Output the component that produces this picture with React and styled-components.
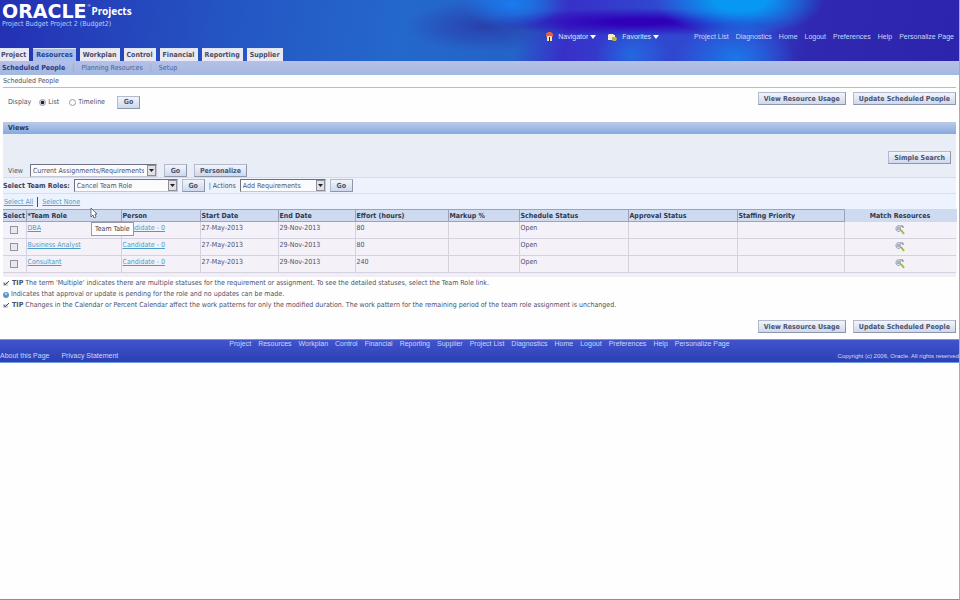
import React, { useState } from "react";
import styled, { createGlobalStyle } from "styled-components";

const tabs = ["Project", "Resources", "Workplan", "Control", "Financial", "Reporting", "Supplier"];
const subTabs = ["Scheduled People", "Planning Resources", "Setup"];
const globalLinks = ["Project List", "Diagnostics", "Home", "Logout", "Preferences", "Help", "Personalize Page"];

const columns = [
  { label: "Select", width: 23 },
  { label: "*Team Role", width: 95 },
  { label: "Person", width: 79 },
  { label: "Start Date", width: 78 },
  { label: "End Date", width: 77 },
  { label: "Effort (hours)", width: 93 },
  { label: "Markup %", width: 71 },
  { label: "Schedule Status", width: 109 },
  { label: "Approval Status", width: 109 },
  { label: "Staffing Priority", width: 107 },
  { label: "Match Resources", width: 112 },
];

const roles = [
  { role: "DBA", person: "Candidate - 0", start: "27-May-2013", end: "29-Nov-2013", effort: 80, status: "Open" },
  { role: "Business Analyst", person: "Candidate - 0", start: "27-May-2013", end: "29-Nov-2013", effort: 80, status: "Open" },
  { role: "Consultant", person: "Candidate - 0", start: "27-May-2013", end: "29-Nov-2013", effort: 240, status: "Open" },
];

const HomeIcon = () => (
  <svg width="7" height="10" viewBox="0 0 7 10" aria-hidden="true">
    <path d="M1 4h5v5H1z" fill="#f3e3a8" />
    <path d="M0 5V2l2-2h3l2 2v3L5 4H2z" fill="#e2604a" />
    <path d="M3 5h1v4H3z" fill="#2a2350" />
  </svg>
);

const FolderIcon = () => (
  <svg width="9" height="9" viewBox="0 0 9 9" aria-hidden="true">
    <path d="M0 2l1-1h4l1 1h1v5H0z" fill="#f7efc4" />
    <path d="M4 4h4l1 2-1 2H5L4 7z" fill="#bdb53c" />
  </svg>
);

const MatchIcon = () => (
  <svg width="10" height="10" viewBox="0 0 10 10" aria-hidden="true">
    <path d="M5 1C2 0 1 2 1 4s2 3 4 2" fill="#e6ecf5" stroke="#8f98ac" />
    <path d="M3 2v3M5 1h3v2M5 2v3l2 1" stroke="#6d7890" fill="none" />
    <path d="M6 5l3 4" stroke="#a4bd32" strokeWidth="2" />
  </svg>
);

const TipIcon = () => (
  <svg width="7" height="7" viewBox="0 0 7 7" aria-hidden="true">
    <path d="M0 2h5v4H0z" fill="#d4d8de" />
    <path d="M1 3l1 2 4-4" stroke="#47505c" fill="none" />
  </svg>
);

const InfoIcon = () => (
  <svg width="6" height="6" viewBox="0 0 6 6" aria-hidden="true">
    <circle cx="3" cy="3" r="3" fill="#5b93cf" />
    <circle cx="3" cy="2" r="1" fill="#d5e6f6" />
  </svg>
);

const Cursor = () => (
  <svg width="8" height="12" viewBox="0 0 8 12" aria-hidden="true">
    <path d="M1 1v9l2-2 1 3 2-1-1-3h2z" fill="#fff" stroke="#4b4f63" strokeWidth="0.8" />
  </svg>
);

const Dropdown = ({ label, width, options }) => (
  <SelectBox $width={width}>
    <NativeSelect aria-label={label}>
      {options.map((option) => (
        <option key={option}>{option}</option>
      ))}
    </NativeSelect>
    <SelectArrow>
      <svg width="5" height="3" viewBox="0 0 5 3" aria-hidden="true">
        <path d="M0 0h5L2.5 3z" fill="#222" />
      </svg>
    </SelectArrow>
  </SelectBox>
);

const App = () => {
  const [display, setDisplay] = useState("list");

  return (
    <Page>
      <GlobalStyle />
      <Header>
        <Brand>
          <BrandLine>
            <Logo>ORACLE</Logo>
            <Registered>®</Registered>
            <Product>Projects</Product>
          </BrandLine>
          <ProjectName>Project Budget Project 2 (Budget2)</ProjectName>
        </Brand>
        <GlobalNav>
          <MenuButton type="button">
            <HomeIcon />
            <MenuText>Navigator</MenuText>
            <Caret />
          </MenuButton>
          <MenuButton type="button">
            <FolderIcon />
            <MenuText>Favorites</MenuText>
            <Caret />
          </MenuButton>
          <LinkRow>
            {globalLinks.map((link) => (
              <LightLink key={link} href="#">{link}</LightLink>
            ))}
          </LinkRow>
        </GlobalNav>
        <TabBar>
          {tabs.map((tab) => (
            <Tab key={tab} href="#" $active={tab === "Resources"}>{tab}</Tab>
          ))}
        </TabBar>
      </Header>

      <SubNav>
        {subTabs.map((tab, index) => (
          <SubTab key={tab} href="#" $active={index === 0}>{tab}</SubTab>
        ))}
      </SubNav>

      <Content>
        <Title>Scheduled People</Title>

        <DisplayRow>
          <span>Display</span>
          <RadioGroup>
            <RadioLabel>
              <Radio type="radio" name="display" checked={display === "list"} onChange={() => setDisplay("list")} />
              List
            </RadioLabel>
            <RadioLabel>
              <Radio type="radio" name="display" checked={display === "timeline"} onChange={() => setDisplay("timeline")} />
              Timeline
            </RadioLabel>
          </RadioGroup>
          <Button type="button">Go</Button>
          <PageActions>
            <Button type="button">View Resource Usage</Button>
            <Button type="button">Update Scheduled People</Button>
          </PageActions>
        </DisplayRow>

        <ViewsBar>Views</ViewsBar>
        <SearchPanel>
          <SearchActions>
            <Button type="button">Simple Search</Button>
          </SearchActions>
          <ViewRow>
            <span>View</span>
            <Dropdown label="View" width={127} options={["Current Assignments/Requirements"]} />
            <Button type="button">Go</Button>
            <Button type="button">Personalize</Button>
          </ViewRow>
        </SearchPanel>

        <RolesRow>
          <RolesLabel>Select Team Roles:</RolesLabel>
          <Dropdown label="Select Team Roles" width={104} options={["Cancel Team Role"]} />
          <Button type="button">Go</Button>
          <span>| Actions</span>
          <Dropdown label="Actions" width={86} options={["Add Requirements"]} />
          <Button type="button">Go</Button>
        </RolesRow>

        <TableArea>
          <SelectLinks>
            <TableLink href="#">Select All</TableLink>
            <Divider />
            <TableLink href="#">Select None</TableLink>
          </SelectLinks>
          <Table>
            <thead>
              <tr>
                {columns.map(({ label, width }) => (
                  <HeadCell key={label} $width={width}>{label}</HeadCell>
                ))}
              </tr>
            </thead>
            <tbody>
              {roles.map((row) => (
                <tr key={row.role}>
                  <Cell>
                    <Checkbox type="checkbox" aria-label={`Select ${row.role}`} />
                  </Cell>
                  <Cell><TableLink href="#">{row.role}</TableLink></Cell>
                  <Cell><TableLink href="#">{row.person}</TableLink></Cell>
                  <Cell>{row.start}</Cell>
                  <Cell>{row.end}</Cell>
                  <Cell>{row.effort}</Cell>
                  <Cell />
                  <Cell>{row.status}</Cell>
                  <Cell />
                  <Cell />
                  <Cell>
                    <IconButton type="button" aria-label="Match resources"><MatchIcon /></IconButton>
                  </Cell>
                </tr>
              ))}
            </tbody>
          </Table>
          <Pointer><Cursor /></Pointer>
          <Tooltip role="tooltip">Team Table</Tooltip>
        </TableArea>

        <Tips>
          <Tip>
            <TipIcon />
            <b>TIP</b> The term 'Multiple' indicates there are multiple statuses for the requirement or assignment. To see the detailed statuses, select the Team Role link.
          </Tip>
          <Tip>
            <InfoIcon />
            Indicates that approval or update is pending for the role and no updates can be made.
          </Tip>
          <Tip>
            <TipIcon />
            <b>TIP</b> Changes in the Calendar or Percent Calendar affect the work patterns for only the modified duration. The work pattern for the remaining period of the team role assignment is unchanged.
          </Tip>
        </Tips>

        <BottomActions>
          <Button type="button">View Resource Usage</Button>
          <Button type="button">Update Scheduled People</Button>
        </BottomActions>
      </Content>

      <Footer>
        <FooterLinks>
          {[...tabs, ...globalLinks].map((link) => (
            <LightLink key={link} href="#">{link}</LightLink>
          ))}
        </FooterLinks>
        <FooterBottom>
          <LightLink href="#">About this Page</LightLink>
          <LightLink href="#">Privacy Statement</LightLink>
          <Copyright>Copyright (c) 2006, Oracle. All rights reserved</Copyright>
        </FooterBottom>
      </Footer>
    </Page>
  );
};

export default App;

// Styled Components

const GlobalStyle = createGlobalStyle`
  * {
    box-sizing: border-box;
  }

  body {
    margin: 0;
    background: #fefefe;
  }
`;

const Page = styled.div`
  min-height: 100vh;
  border-right: 1px solid #a9a9b4;
  border-bottom: 1px solid #8d8d95;
  font-family: "DejaVu Sans Condensed", "DejaVu Sans", sans-serif;
  font-size: 7px;
  line-height: 10px;
  color: #4c5068;
  overflow: hidden;
`;

const Header = styled.header`
  display: grid;
  grid-template-columns: auto 1fr;
  grid-template-rows: 48px 13px;
  background:
    radial-gradient(ellipse 85px 36px at 740px 0, #0798f2 30%, transparent 100%),
    radial-gradient(ellipse 60px 36px at 735px 58px, #1b77e8, transparent 100%),
    radial-gradient(ellipse 50px 24px at 512px 4px, #1a7af0, transparent 100%),
    radial-gradient(ellipse 150px 14px at 640px 22px, #3000b8 20%, transparent 100%),
    radial-gradient(ellipse 80px 26px at 485px 26px, #2a40ac, transparent 100%),
    radial-gradient(ellipse 36px 28px at 632px 55px, #2468e0, transparent 100%),
    linear-gradient(100deg, #2430b4 0%, #2444bc 12%, #2458c4 26%, #2468cc 42%, #2463c8 54%, #3830c8 59%, #3048d0 68%, #3444cc 78%, #3028b0 84%, #2c24ac 100%);
`;

const Brand = styled.div`
  padding: 3px 2px 0;
`;

const BrandLine = styled.div`
  display: flex;
  align-items: center;
  gap: 1px;
  height: 16px;
  color: #fff;
`;

const Logo = styled.span`
  font: bold 19px/16px "DejaVu Sans", sans-serif;
`;

const Registered = styled.span`
  align-self: flex-start;
  font: 4px/6px "Liberation Sans", Arial, sans-serif;
`;

const Product = styled.span`
  font: bold 10px/16px "Noto Sans", sans-serif;
`;

const ProjectName = styled.div`
  color: #b9cdf6;
`;

const GlobalNav = styled.nav`
  display: flex;
  justify-content: flex-end;
  align-items: flex-end;
  gap: 12px;
  padding: 0 5px 6px 0;
  font: 7px/10px "Liberation Sans", Arial, sans-serif;
`;

const MenuButton = styled.button`
  display: flex;
  align-items: center;
  gap: 2px;
  padding: 0;
  border: 0;
  background: none;
  color: #d5e2ff;
  font: inherit;
  cursor: pointer;
`;

const MenuText = styled.span`
  padding-left: 3px;
`;

const Caret = styled.span`
  border: 3px solid transparent;
  border-top: 4px solid #fff;
  border-bottom: 0;
`;

const LinkRow = styled.div`
  display: flex;
  gap: 7px;
  margin-left: 23px;
`;

const LightLink = styled.a`
  color: #c8d8fa;
  text-decoration: none;
  white-space: nowrap;
`;

const TabBar = styled.nav`
  grid-column: 1 / -1;
  display: flex;
  gap: 4px;
`;

const Tab = styled.a`
  padding: 1px 3px;
  background: ${({ $active }) => ($active ? "#a9c0ea" : "#e9e9f3")};
  border-top: 1px solid #dfe6f5;
  color: ${({ $active }) => ($active ? "#23438c" : "#4a4c62")};
  font-weight: bold;
  text-decoration: none;

  &:first-child {
    padding-left: 1px;
  }
`;

const SubNav = styled.nav`
  display: flex;
  height: 14px;
  padding: 2px;
  background: linear-gradient(#b7bfe6, #a3b8e0);
`;

const SubTab = styled.a`
  color: ${({ $active }) => ($active ? "#1f3c8c" : "#47639b")};
  font-weight: ${({ $active }) => ($active ? "bold" : "normal")};
  text-decoration: none;

  &:not(:first-child)::before {
    content: "|";
    margin: 0 7px;
    color: #8fa3d2;
  }
`;

const Content = styled.main`
  padding: 0 3px;
`;

const Title = styled.h1`
  margin: 0;
  padding: 1px 0;
  border-bottom: 1px solid #b9b9c8;
  font-size: 7px;
  font-weight: normal;
`;

const DisplayRow = styled.div`
  display: flex;
  align-items: center;
  gap: 8px;
  height: 28px;
  padding-left: 5px;
`;

const RadioGroup = styled.div`
  display: flex;
  gap: 10px;
  padding-right: 4px;
`;

const RadioLabel = styled.label`
  display: flex;
  align-items: center;
  gap: 2px;
`;

const Radio = styled.input`
  appearance: none;
  width: 7px;
  height: 7px;
  margin: 0;
  border: 1px solid #9a9cab;
  border-radius: 50%;
  background: #fff;

  &:checked {
    background: radial-gradient(#22242e 40%, #e0e2ea 60%);
  }
`;

const Button = styled.button`
  min-width: 23px;
  height: 13px;
  padding: 0 5px;
  border: 1px solid #b3bacb;
  border-right-color: #8f96aa;
  border-bottom-color: #8f96aa;
  background: linear-gradient(#f2f4fa, #cfd9ec);
  color: #4a5370;
  font: bold 7px/10px "DejaVu Sans Condensed", "DejaVu Sans", sans-serif;
  white-space: nowrap;
  cursor: pointer;
`;

const PageActions = styled.div`
  display: flex;
  gap: 7px;
  height: 20px;
  margin-left: auto;
`;

const ViewsBar = styled.h2`
  margin: 6px 0 0;
  padding: 1px 5px;
  background: linear-gradient(#bccbe9, #86a9de);
  color: #26365c;
  font-size: 7px;
`;

const SearchPanel = styled.section`
  padding: 17px 5px 0;
  background: #e9edf6;
  border-bottom: 1px solid #d5dbe8;
`;

const SearchActions = styled.div`
  display: flex;
  justify-content: flex-end;
`;

const ViewRow = styled.div`
  display: flex;
  align-items: center;
  gap: 7px;
`;

const SelectBox = styled.div`
  position: relative;
  width: ${({ $width }) => $width}px;
`;

const NativeSelect = styled.select`
  appearance: none;
  display: block;
  width: 100%;
  height: 13px;
  padding: 0 12px 0 2px;
  border: 1px solid #c5c8d4;
  border-top-color: #6f7280;
  border-left-color: #6f7280;
  border-radius: 0;
  background: #fbfbfe;
  color: #4c5068;
  font: inherit;
`;

const SelectArrow = styled.span`
  position: absolute;
  top: 1px;
  right: 1px;
  bottom: 1px;
  display: flex;
  align-items: center;
  justify-content: center;
  width: 9px;
  border: 1px solid #8c8f9c;
  background: #e1e1e6;
  pointer-events: none;
`;

const RolesRow = styled.div`
  display: flex;
  align-items: center;
  gap: 4px;
  height: 16px;
  background: #edf2fd;
  border-bottom: 1px solid #d9dfeb;
`;

const RolesLabel = styled.span`
  font-weight: bold;
  color: #3a3f58;
`;

const TableArea = styled.section`
  position: relative;
  padding-bottom: 4px;
  background: #f1eef5;
`;

const SelectLinks = styled.div`
  display: flex;
  align-items: center;
  gap: 4px;
  height: 15px;
  padding-left: 1px;
  background: #edf3fe;
`;

const Divider = styled.span`
  width: 1px;
  height: 10px;
  background: #4c5068;
`;

const TableLink = styled.a`
  color: #4c9cc8;
`;

const Table = styled.table`
  width: 100%;
  table-layout: fixed;
  border-collapse: collapse;
  background: #f4f1f8;
`;

const HeadCell = styled.th`
  width: ${({ $width }) => $width}px;
  height: 12px;
  padding: 0 1px;
  border: 1px solid #9aa3b8;
  border-left-color: #b5bccd;
  background: #cddaf0;
  color: #2f3850;
  text-align: left;
  white-space: nowrap;

  &:first-child {
    padding: 0;
    border-left: 0;
  }

  &:last-child {
    border-color: #cddaf0;
    text-align: center;
  }
`;

const Cell = styled.td`
  height: 17px;
  padding: 1px 1px 0;
  border: 1px solid #d3d2de;
  border-top: 0;
  vertical-align: top;

  &:first-child {
    border-left: 0;
  }

  &:last-child {
    border-right: 0;
  }
`;

const Checkbox = styled.input`
  appearance: none;
  display: block;
  width: 8px;
  height: 8px;
  margin: 3px auto 0;
  border: 1px solid #9293a3;
  background: #e8e8ee;
`;

const IconButton = styled.button`
  display: block;
  width: 10px;
  height: 10px;
  margin: 2px auto 0;
  padding: 0;
  border: 0;
  background: none;
  line-height: 0;
`;

const Pointer = styled.span`
  position: absolute;
  top: 13px;
  left: 87px;
  line-height: 0;
`;

const Tooltip = styled.span`
  position: absolute;
  top: 28px;
  left: 88px;
  padding: 1px 3px;
  border: 1px solid #9a9aa6;
  background: #fdfdff;
  color: #3b3d4c;
  white-space: nowrap;
`;

const Tips = styled.section`
  padding-top: 1px;
`;

const Tip = styled.p`
  display: flex;
  align-items: center;
  gap: 2px;
  margin: 0;
  line-height: 11px;
`;

const BottomActions = styled.div`
  display: flex;
  justify-content: flex-end;
  gap: 7px;
  padding: 9px 0 6px;
`;

const Footer = styled.footer`
  height: 24px;
  border: solid #6f9be0;
  border-width: 1px 0;
  background: linear-gradient(#4253cc, #2b40b4);
  font: 7px/8px "Liberation Sans", Arial, sans-serif;
`;

const FooterLinks = styled.nav`
  display: flex;
  justify-content: center;
  gap: 7px;
`;

const FooterBottom = styled.div`
  display: flex;
  gap: 12px;
  padding-top: 4px;
`;

const Copyright = styled.span`
  margin-left: auto;
  color: #d5ddf8;
  font-size: 6px;
`;
